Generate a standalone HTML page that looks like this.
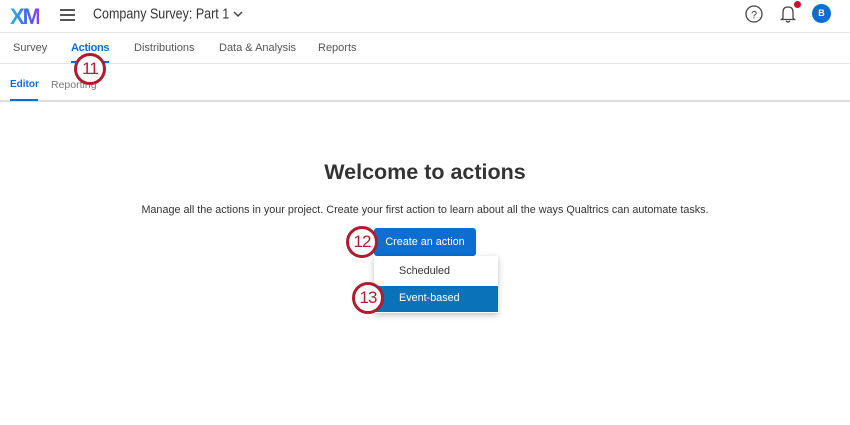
<!DOCTYPE html>
<html><head><style>
body{margin:0;width:850px;height:425px;background:#fff;font-family:"Liberation Sans",sans-serif;position:relative;overflow:hidden;color:#333}
.a{position:absolute;white-space:nowrap}
.circ{position:absolute;width:26px;height:26px;border:3px solid #b01c2e;border-radius:50%;background:#fff;color:#b01c2e;font-size:17px;text-align:center;line-height:26px;letter-spacing:-1px}
.t{font-size:11px;color:#555;top:42px}
</style></head><body>
<div class="a" style="left:10px;top:4px;font-size:22px;font-weight:bold;letter-spacing:-2px;background:linear-gradient(90deg,#20c0d8,#3a6ef0,#8a3ef0);-webkit-background-clip:text;color:transparent">XM</div>
<div class="a" style="left:60px;top:9px;width:15px;height:2px;background:#555;box-shadow:0 5px 0 #555,0 10px 0 #555"></div>
<div class="a" style="left:93px;top:6px;font-size:12.5px;color:#333;transform:scaleY(1.15);transform-origin:top left">Company Survey: Part 1</div>
<svg class="a" style="left:233px;top:10px" width="10" height="8"><path d="M1 2 L5 6 L9 2" stroke="#444" stroke-width="1.5" fill="none"/></svg>
<svg class="a" style="left:745px;top:5px" width="18" height="18"><circle cx="9" cy="9" r="8" stroke="#444" stroke-width="1.3" fill="none"/><text x="9" y="13.5" font-size="11" text-anchor="middle" fill="#444" font-family="Liberation Sans">?</text></svg>
<svg class="a" style="left:780px;top:4px" width="16" height="20"><path d="M3 14 L3 8 Q3 3 8 3 Q13 3 13 8 L13 14 L14.5 15.5 L1.5 15.5 Z M6 17 Q8 19 10 17" stroke="#444" stroke-width="1.3" fill="none"/></svg>
<div class="a" style="left:794px;top:1px;width:7px;height:7px;border-radius:50%;background:#c8102e"></div>
<div class="a" style="left:812px;top:4px;width:19px;height:19px;border-radius:50%;background:#0b6ed0;color:#fff;font-size:9px;font-weight:bold;text-align:center;line-height:19px">B</div>
<div class="a" style="left:0;top:32px;width:850px;height:1px;background:#e5e5e5"></div>
<div class="a t" style="left:13px">Survey</div>
<div class="a t" style="left:71px;color:#0b6ed0;font-weight:bold;letter-spacing:-0.3px">Actions</div>
<div class="a t" style="left:134px">Distributions</div>
<div class="a t" style="left:219px">Data &amp; Analysis</div>
<div class="a t" style="left:318px">Reports</div>
<div class="a" style="left:0;top:63px;width:850px;height:1px;background:#e5e5e5"></div>
<div class="a" style="left:71px;top:61px;width:38px;height:2px;background:#0b6ed0"></div>
<div class="a" style="left:10px;top:79px;font-size:10px;color:#0b6ed0;font-weight:bold">Editor</div>
<div class="a" style="left:51px;top:79px;font-size:10.5px;color:#777">Reporting</div>
<div class="a" style="left:0;top:100px;width:850px;height:2px;background:#ddd"></div>
<div class="a" style="left:10px;top:99px;width:28px;height:2px;background:#0b6ed0"></div>
<div class="circ" style="left:74px;top:53px">11</div>
<div class="a" style="left:0;width:850px;top:160px;text-align:center;font-size:21.5px;font-weight:bold;color:#333">Welcome to actions</div>
<div class="a" style="left:0;width:850px;top:204px;text-align:center;font-size:10.8px;color:#333">Manage all the actions in your project. Create your first action to learn about all the ways Qualtrics can automate tasks.</div>
<div class="a" style="left:374px;top:228px;width:102px;height:28px;background:#0b6ed0;border-radius:3px;color:#fff;font-size:10.8px;line-height:28px;text-align:center">Create an action</div>
<div class="a" style="left:374px;top:256px;width:124px;height:57px;background:#fff;box-shadow:0 2px 6px rgba(0,0,0,.25)"></div>
<div class="a" style="left:399px;top:265px;font-size:10.8px;color:#333">Scheduled</div>
<div class="a" style="left:374px;top:286px;width:124px;height:26px;background:#0a72b9"></div>
<div class="a" style="left:399px;top:292px;font-size:10.8px;color:#fff">Event-based</div>
<div class="circ" style="left:346px;top:226px">12</div>
<div class="circ" style="left:352px;top:282px">13</div>
</body></html>
